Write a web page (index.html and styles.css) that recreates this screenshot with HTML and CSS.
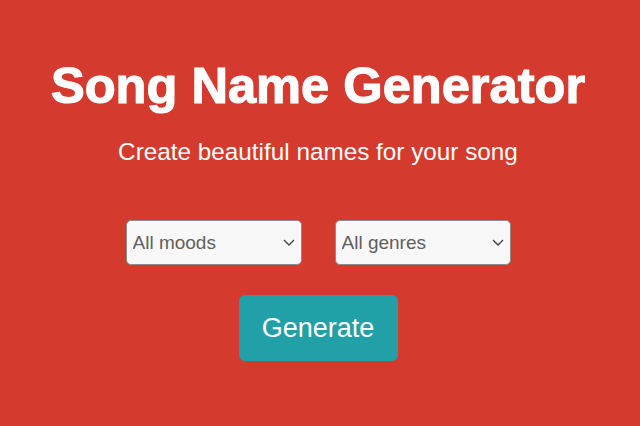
FILE: index.html
```html
<!DOCTYPE html>
<html lang="en">
<head>
<meta charset="utf-8">
<title>Song Name Generator</title>
<link rel="stylesheet" href="styles.css">
</head>
<body>
<main class="app">
  <h1 class="title">Song Name Generator</h1>
  <p class="subtitle">Create beautiful names for your song</p>
  <div class="filters">
    <div class="select-wrap">
      <select class="select">
        <option>All moods</option>
      </select>
      <svg class="chevron" width="12" height="7" viewBox="0 0 12 7"><path d="M1 1l5 5 5-5" fill="none" stroke="#444" stroke-width="1.4"/></svg>
    </div>
    <div class="select-wrap">
      <select class="select">
        <option>All genres</option>
      </select>
      <svg class="chevron" width="12" height="7" viewBox="0 0 12 7"><path d="M1 1l5 5 5-5" fill="none" stroke="#444" stroke-width="1.4"/></svg>
    </div>
  </div>
  <button class="generate" type="button">Generate</button>
</main>
</body>
</html>
```
FILE: styles.css
```css
html, body {
  margin: 0;
  padding: 0;
  height: 100%;
}
body {
  background: #d43a2e;
  font-family: "Liberation Sans", Arial, sans-serif;
  color: #fff;
}
.app {
  display: flex;
  flex-direction: column;
  align-items: center;
  padding-top: 57px;
  padding-right: 4px;
}
.title {
  margin: 0;
  font-size: 50.6px;
  font-weight: bold;
  line-height: 58px;
  -webkit-text-stroke: 1.2px #fff;
}
.subtitle {
  margin: 23px 0 0;
  font-size: 24.3px;
  line-height: 28px;
}
.filters {
  display: flex;
  gap: 33px;
  margin-top: 54px;
}
.select-wrap {
  position: relative;
}
.select {
  appearance: none;
  -webkit-appearance: none;
  display: block;
  width: 176px;
  height: 45px;
  font-family: "Liberation Sans", Arial, sans-serif;
  font-size: 19px;
  color: #5f5f5f;
  background: #f8f8f8;
  border: 1px solid #8c8c8c;
  border-radius: 5px;
  padding: 0 6px;
}
.chevron {
  position: absolute;
  right: 7px;
  top: 19px;
  pointer-events: none;
}
.generate {
  margin-top: 30px;
  width: 159px;
  height: 66px;
  background: #22a0a8;
  border: none;
  border-radius: 6px;
  color: #fff;
  font-family: "Liberation Sans", Arial, sans-serif;
  font-size: 27px;
}
```
